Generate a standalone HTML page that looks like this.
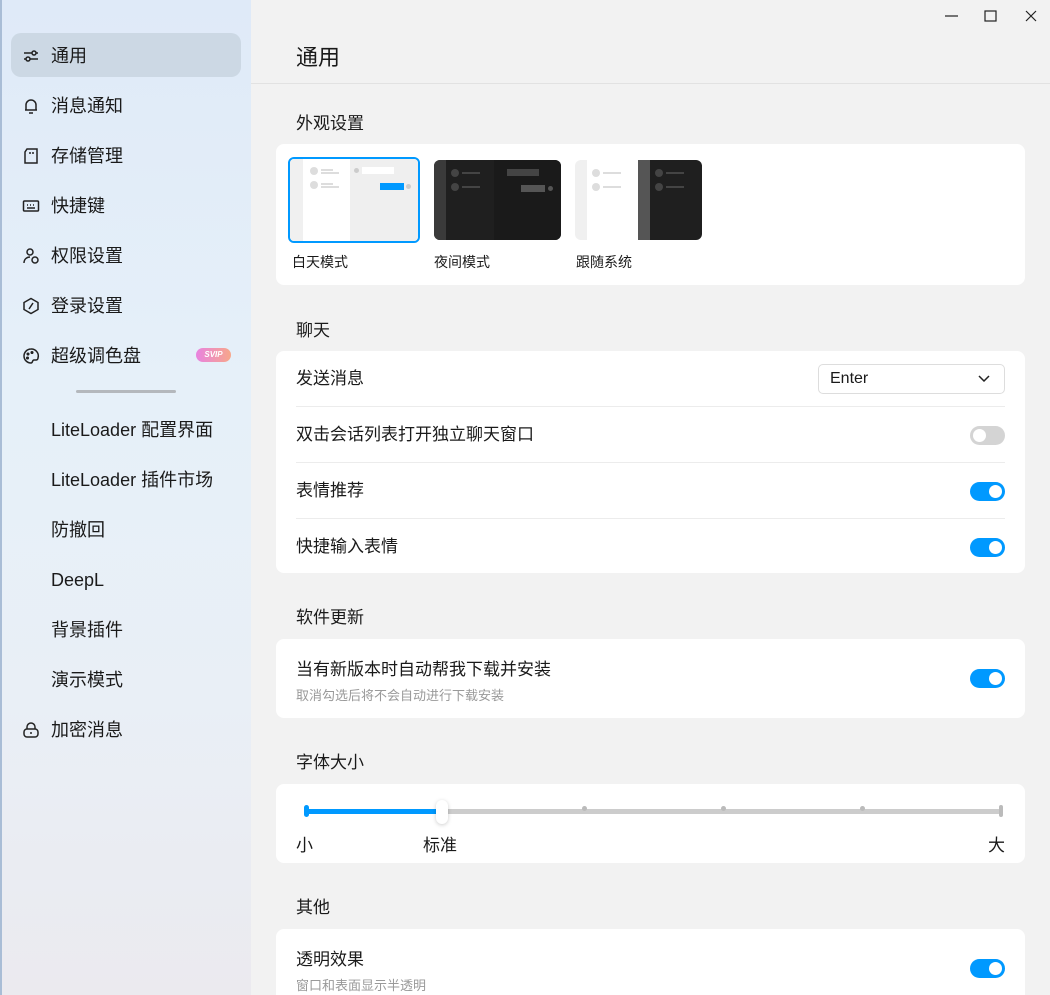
<!DOCTYPE html>
<html><head><meta charset="utf-8"><style>
*{margin:0;padding:0;box-sizing:border-box}
html{overflow:hidden}
body{width:1050px;height:995px;overflow:hidden;font-family:"Liberation Sans","Noto Sans CJK SC",sans-serif;color:#1a1a1a;background:#f2f2f2;position:relative}
.side{position:absolute;left:0;top:0;width:251px;height:995px;background:linear-gradient(180deg,#dfeaf8 0%,#e6f0f9 40%,#e9eff6 70%,#ebeaef 100%);box-shadow:inset 2px 0 0 #a9bdd6}
.it{position:absolute;left:22px;height:24px;font-size:18px;line-height:24px;display:flex;align-items:center}
.it svg{width:18px;height:18px;margin-right:11px;fill:none;stroke:#222;stroke-width:1.5}
.it.np{left:51px}
.active{position:absolute;left:11px;top:33px;width:230px;height:44px;border-radius:10px;background:#ccd8e4}
.svip{position:absolute;left:196px;top:348px;width:35px;height:14px;border-radius:7px;background:linear-gradient(90deg,#e883e0,#f7a78a);color:#fff;font-size:8px;font-weight:bold;font-style:italic;text-align:center;line-height:14px}
.main{position:absolute;left:251px;top:0;right:0;bottom:0;overflow:hidden}
.hd{position:absolute;left:0;right:0;top:0;height:84px;border-bottom:1px solid #e2e2e2}
.hd h1{position:absolute;left:45px;top:40px;font-size:22px;font-weight:normal}
.st{position:absolute;left:45px;font-size:17px}
.card{position:absolute;left:25px;width:749px;background:#fff;border-radius:8px}
.row{position:absolute;left:20px;right:20px;height:56px;border-bottom:1px solid #ececec;font-size:17px;line-height:56px}
.tg{position:absolute;right:0;top:19px;width:35px;height:19px;border-radius:10px;background:#0099ff}
.tg::after{content:"";position:absolute;right:3px;top:3px;width:13px;height:13px;border-radius:50%;background:#fff}
.tg.off{background:#d4d4d4}
.tg.off::after{left:3px;right:auto}
.sub{font-size:13px;color:#999}
.thumb{position:absolute;top:16px;width:127px;height:80px;border-radius:6px;overflow:hidden}
.thumb i{position:absolute;display:block}
.lbl{position:absolute;top:108px;font-size:14px}
</style></head><body>
<div class="side">
<div class="active"></div>
<div class="it" style="top:44px"><svg viewBox="0 0 18 18"><path d="M2 6h8M14 6h2M2 12h2M8 12h8"/><circle cx="12" cy="6" r="2"/><circle cx="6" cy="12" r="2"/></svg>通用</div>
<div class="it" style="top:94px"><svg viewBox="0 0 18 18"><path d="M4 13V8a5 5 0 0 1 10 0v5H3h12M7 16h4"/></svg>消息通知</div>
<div class="it" style="top:144px"><svg viewBox="0 0 18 18"><path d="M5 2h10v14H3V5z M8 5v2M11 5v2"/></svg>存储管理</div>
<div class="it" style="top:194px"><svg viewBox="0 0 18 18"><rect x="1.5" y="4" width="15" height="10" rx="1"/><path d="M5 11h8M5 8h1M8 8h1M11 8h1"/></svg>快捷键</div>
<div class="it" style="top:244px"><svg viewBox="0 0 18 18"><circle cx="8" cy="5" r="3"/><path d="M2 16c0-4 3-6 6-6"/><circle cx="13" cy="13" r="3"/></svg>权限设置</div>
<div class="it" style="top:294px"><svg viewBox="0 0 18 18"><path d="M9 1.5l7 4v7l-7 4-7-4v-7z M7 12l4-6"/></svg>登录设置</div>
<div class="it" style="top:344px"><svg viewBox="0 0 18 18"><path d="M9 2a7 7 0 1 0 0 14c2 0 1-3 3-3h2a2 2 0 0 0 2-2 7 7 0 0 0-7-9z"/><circle cx="6" cy="7" r=".8"/><circle cx="10" cy="5.5" r=".8"/><circle cx="5.5" cy="11" r=".8"/></svg>超级调色盘</div>
<div class="svip">SVIP</div>
<div style="position:absolute;left:76px;top:390px;width:100px;height:3px;border-radius:2px;background:#b4b8bd"></div>
<div class="it np" style="top:418px">LiteLoader 配置界面</div>
<div class="it np" style="top:468px">LiteLoader 插件市场</div>
<div class="it np" style="top:518px">防撤回</div>
<div class="it np" style="top:568px">DeepL</div>
<div class="it np" style="top:618px">背景插件</div>
<div class="it np" style="top:668px">演示模式</div>
<div class="it" style="top:718px"><svg viewBox="0 0 18 18"><rect x="2" y="8" width="14" height="8" rx="3"/><path d="M5 8V6a4 4 0 0 1 8 0v2M9 11v2"/></svg>加密消息</div>
</div>
<div class="main">
<div class="hd"><h1>通用</h1>
<svg style="position:absolute;left:684px;top:8px" width="120" height="18" fill="none" stroke="#222" stroke-width="1.2"><path d="M10 8h13"/><rect x="50" y="3" width="11" height="10"/><path d="M91 3l10 10M101 3l-10 10"/></svg></div>
<div class="st" style="top:109px">外观设置</div>
<div class="card" style="top:144px;height:141px">
<div class="thumb" style="left:12px;border:2px solid #0099ff;background:#fff;top:13px;width:132px;height:86px">
<i style="left:0;top:0;width:13px;height:100%;background:#f0f0f0"></i>
<i style="left:60px;top:0;right:0;height:100%;background:#efefef"></i>
<i style="left:20px;top:8px;width:8px;height:8px;border-radius:50%;background:#ddd"></i>
<i style="left:20px;top:22px;width:8px;height:8px;border-radius:50%;background:#ddd"></i>
<i style="left:31px;top:10px;width:12px;height:1.5px;background:#ddd"></i><i style="left:31px;top:13px;width:18px;height:1.5px;background:#ddd"></i>
<i style="left:31px;top:24px;width:12px;height:1.5px;background:#ddd"></i><i style="left:31px;top:27px;width:18px;height:1.5px;background:#ddd"></i>
<i style="left:64px;top:9px;width:5px;height:5px;border-radius:50%;background:#ccc"></i>
<i style="left:72px;top:8px;width:32px;height:7px;background:#fff"></i>
<i style="left:90px;top:24px;width:24px;height:7px;background:#0099ff"></i>
<i style="left:116px;top:25px;width:5px;height:5px;border-radius:50%;background:#ccc"></i>
</div>
<div class="thumb" style="left:158px;background:#1f1f1f">
<i style="left:0;top:0;width:12px;height:100%;background:#3a3a3a"></i>
<i style="left:60px;top:0;right:0;height:100%;background:#1a1a1a"></i>
<i style="left:17px;top:9px;width:8px;height:8px;border-radius:50%;background:#444"></i>
<i style="left:17px;top:23px;width:8px;height:8px;border-radius:50%;background:#444"></i>
<i style="left:28px;top:12px;width:18px;height:2px;background:#444"></i><i style="left:28px;top:26px;width:18px;height:2px;background:#444"></i>
<i style="left:73px;top:9px;width:32px;height:7px;background:#444"></i>
<i style="left:87px;top:25px;width:24px;height:7px;background:#555"></i>
<i style="left:114px;top:26px;width:5px;height:5px;border-radius:50%;background:#555"></i>
</div>
<div class="thumb" style="left:299px;background:#fff">
<i style="left:0;top:0;width:12px;height:100%;background:#f0f0f0"></i>
<i style="left:63px;top:0;width:12px;height:100%;background:#555"></i>
<i style="left:75px;top:0;right:0;height:100%;background:#1f1f1f"></i>
<i style="left:17px;top:9px;width:8px;height:8px;border-radius:50%;background:#ddd"></i>
<i style="left:17px;top:23px;width:8px;height:8px;border-radius:50%;background:#ddd"></i>
<i style="left:28px;top:12px;width:18px;height:2px;background:#ddd"></i><i style="left:28px;top:26px;width:18px;height:2px;background:#ddd"></i>
<i style="left:80px;top:9px;width:8px;height:8px;border-radius:50%;background:#444"></i>
<i style="left:80px;top:23px;width:8px;height:8px;border-radius:50%;background:#444"></i>
<i style="left:91px;top:12px;width:18px;height:2px;background:#444"></i><i style="left:91px;top:26px;width:18px;height:2px;background:#444"></i>
</div>
<div class="lbl" style="left:16px">白天模式</div>
<div class="lbl" style="left:158px">夜间模式</div>
<div class="lbl" style="left:300px">跟随系统</div>
</div>
<div class="st" style="top:316px">聊天</div>
<div class="card" style="top:351px;height:222px">
<div class="row" style="top:0">发送消息<div style="position:absolute;right:0;top:13px;width:187px;height:30px;border:1px solid #ddd;border-radius:5px;font-size:16px;line-height:28px;padding-left:11px">Enter<svg style="position:absolute;right:14px;top:10px" width="12" height="8" fill="none" stroke="#222" stroke-width="1.5"><path d="M1 1l5 5 5-5"/></svg></div></div>
<div class="row" style="top:56px">双击会话列表打开独立聊天窗口<div class="tg off"></div></div>
<div class="row" style="top:112px">表情推荐<div class="tg"></div></div>
<div class="row" style="top:168px;border:none">快捷输入表情<div class="tg"></div></div>
</div>
<div class="st" style="top:603px">软件更新</div>
<div class="card" style="top:639px;height:79px">
<div style="position:absolute;left:20px;top:16px;font-size:17px">当有新版本时自动帮我下载并安装</div>
<div class="sub" style="position:absolute;left:20px;top:46px">取消勾选后将不会自动进行下载安装</div>
<div class="tg" style="right:20px;top:30px"></div>
</div>
<div class="st" style="top:748px">字体大小</div>
<div class="card" style="top:784px;height:79px">
<div style="position:absolute;left:30px;top:25px;width:695px;height:5px;background:#ccc;border-radius:3px"></div>
<div style="position:absolute;left:30px;top:25px;width:138px;height:5px;background:#0099ff"></div>
<div style="position:absolute;left:28px;top:21px;width:5px;height:12px;border-radius:3px;background:#0099ff"></div>
<div style="position:absolute;left:306px;top:22px;width:5px;height:5px;border-radius:50%;background:#bbb"></div>
<div style="position:absolute;left:445px;top:22px;width:5px;height:5px;border-radius:50%;background:#bbb"></div>
<div style="position:absolute;left:584px;top:22px;width:5px;height:5px;border-radius:50%;background:#bbb"></div>
<div style="position:absolute;left:723px;top:21px;width:4px;height:12px;border-radius:2px;background:#bbb"></div>
<div style="position:absolute;left:160px;top:16px;width:12px;height:24px;border-radius:6px;background:#fff;box-shadow:0 1px 4px rgba(0,0,0,.2)"></div>
<div style="position:absolute;left:20px;top:47px;font-size:17px">小</div>
<div style="position:absolute;left:147px;top:47px;font-size:17px">标准</div>
<div style="position:absolute;left:712px;top:47px;font-size:17px">大</div>
</div>
<div class="st" style="top:893px">其他</div>
<div class="card" style="top:929px;height:80px">
<div style="position:absolute;left:20px;top:16px;font-size:17px">透明效果</div>
<div class="sub" style="position:absolute;left:20px;top:46px">窗口和表面显示半透明</div>
<div class="tg" style="right:20px;top:30px"></div>
</div>
</div>
</body></html>
